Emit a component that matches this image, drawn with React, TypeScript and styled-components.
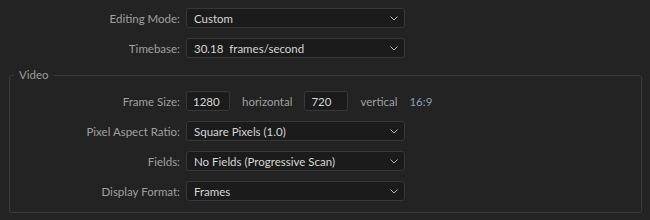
import React from "react";
import styled, { createGlobalStyle } from "styled-components";

const Global = createGlobalStyle`
  html, body { margin: 0; padding: 0; background: #232323; }
  body { font-family: Lato, "Open Sans", sans-serif; font-size: 11.5px; color: #a3a3a3; }
`;

const Page = styled.div`
  width: 650px;
  height: 220px;
  box-sizing: border-box;
  padding-top: 8px;
  background: #232323;
  overflow: hidden;
`;

const Section = styled.div`
  display: flex;
  flex-direction: column;
  gap: 10px;
`;

const Row = styled.div<{ $labelWidth: number }>`
  display: grid;
  grid-template-columns: ${(p) => p.$labelWidth}px auto;
  column-gap: 6px;
  align-items: center;
  height: 20px;
`;

const Label = styled.span`
  text-align: right;
  color: #a0a0a0;
  white-space: nowrap;
`;

const Select = styled.div`
  box-sizing: border-box;
  width: 219px;
  height: 20px;
  display: flex;
  align-items: center;
  justify-content: space-between;
  padding: 0 6px 0 7px;
  background: #1b1b1b;
  border: 1px solid #383838;
  border-radius: 3px;
  color: #d6d6d6;
  white-space: pre;
`;

const Group = styled.fieldset`
  margin: 10px 8px 0 9px;
  padding: 9px 0 11px 0;
  border: 1px solid #3a3a3a;
  border-radius: 3px;
  display: flex;
  flex-direction: column;
  gap: 10px;
`;

const Legend = styled.legend`
  margin-left: 4px;
  padding: 0 5px;
  line-height: 14px;
  color: #9c9c9c;
`;

const Inline = styled.div`
  display: flex;
  align-items: center;
`;

const NumberBox = styled.div`
  box-sizing: border-box;
  width: 44px;
  height: 20px;
  display: flex;
  align-items: center;
  padding-left: 6px;
  background: #1b1b1b;
  border: 1px solid #383838;
  border-radius: 3px;
  color: #d6d6d6;
`;

const Unit = styled.span`
  margin: 0 12px;
  color: #a0a0a0;
`;

const Ratio = styled.span`
  color: #8d9db3;
`;

const Chevron = () => (
  <svg width="8" height="5" viewBox="0 0 8 5">
    <polyline points="0.5,0.5 4,4 7.5,0.5" fill="none" stroke="#b4b4b4" strokeWidth="1" />
  </svg>
);

const Dropdown = ({ value }: { value: string }) => (
  <Select>
    <span>{value}</span>
    <Chevron />
  </Select>
);

export default function App() {
  return (
    <Page>
      <Global />
      <Section>
        <Row $labelWidth={180}>
          <Label>Editing Mode:</Label>
          <Dropdown value="Custom" />
        </Row>
        <Row $labelWidth={180}>
          <Label>Timebase:</Label>
          <Dropdown value="30.18  frames/second" />
        </Row>
      </Section>
      <Group>
        <Legend>Video</Legend>
        <Row $labelWidth={170}>
          <Label>Frame Size:</Label>
          <Inline>
            <NumberBox>1280</NumberBox>
            <Unit>horizontal</Unit>
            <NumberBox>720</NumberBox>
            <Unit>vertical</Unit>
            <Ratio>16:9</Ratio>
          </Inline>
        </Row>
        <Row $labelWidth={170}>
          <Label>Pixel Aspect Ratio:</Label>
          <Dropdown value="Square Pixels (1.0)" />
        </Row>
        <Row $labelWidth={170}>
          <Label>Fields:</Label>
          <Dropdown value="No Fields (Progressive Scan)" />
        </Row>
        <Row $labelWidth={170}>
          <Label>Display Format:</Label>
          <Dropdown value="Frames" />
        </Row>
      </Group>
    </Page>
  );
}
